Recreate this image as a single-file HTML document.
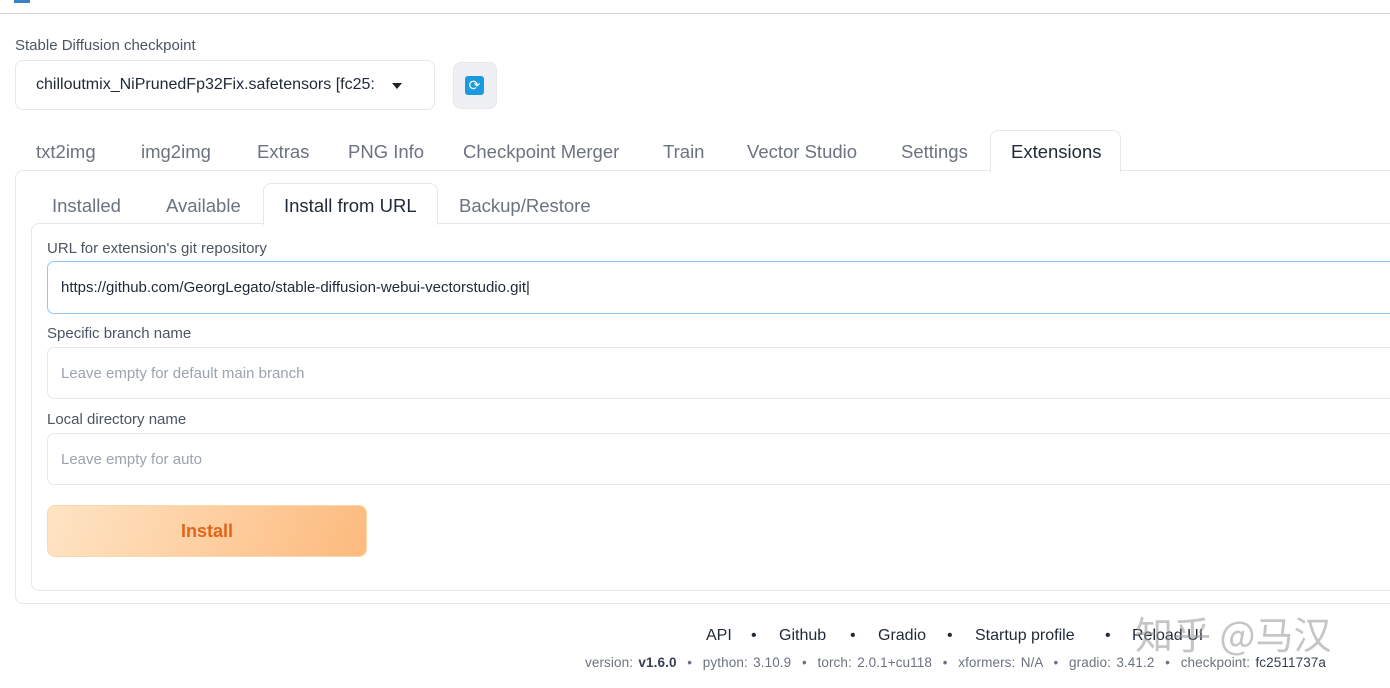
<!DOCTYPE html>
<html><head><meta charset="utf-8"><style>
*{box-sizing:border-box;margin:0;padding:0}
body{width:1390px;height:688px;overflow:hidden;background:#fff;font-family:"Liberation Sans",sans-serif;color:#374151;position:relative}
.a{position:absolute}
.lbl{font-size:15px;color:#4b5563}
.tab{position:absolute;top:141px;font-size:18.5px;color:#6b7280}
.itab{position:absolute;top:195px;font-size:18.5px;color:#6b7280}
.inp{position:absolute;left:47px;width:1360px;border:1px solid #e5e7eb;border-radius:7px;font-size:15px;color:#9ca3af;padding-left:13px;display:flex;align-items:center}
.f{position:absolute;top:627px;font-size:16px;color:#1f2937;white-space:nowrap}
</style></head><body>
<div class="a" style="left:0;top:13px;width:1390px;height:1px;background:#d1d5db"></div>
<div class="a" style="left:14px;top:0;width:16px;height:3px;background:#3b82c4"></div>
<div class="a lbl" style="left:15px;top:37px">Stable Diffusion checkpoint</div>
<div class="a" style="left:15px;top:60px;width:420px;height:50px;border:1px solid #e5e7eb;border-radius:8px;font-size:16px;color:#1f2937;padding:15px 0 0 20px">chilloutmix_NiPrunedFp32Fix.safetensors [fc25:</div>
<div class="a" style="left:392px;top:83px;width:0;height:0;border-left:5px solid transparent;border-right:5px solid transparent;border-top:6px solid #222"></div>
<div class="a" style="left:453px;top:62px;width:44px;height:47px;background:#eef0f3;border:1px solid #e5e7eb;border-radius:8px"></div>
<div class="a" style="left:465px;top:76px;width:19px;height:19px;background:#1a9be0;border-radius:3px;color:#fff;font-size:14px;line-height:19px;text-align:center">⟳</div>
<div class="tab" style="left:36px">txt2img</div>
<div class="tab" style="left:141px">img2img</div>
<div class="tab" style="left:257px">Extras</div>
<div class="tab" style="left:348px">PNG Info</div>
<div class="tab" style="left:463px">Checkpoint Merger</div>
<div class="tab" style="left:663px">Train</div>
<div class="tab" style="left:747px">Vector Studio</div>
<div class="tab" style="left:901px">Settings</div>
<div class="a" style="left:15px;top:170px;width:1400px;height:434px;border:1px solid #e5e7eb;border-radius:8px"></div>
<div class="a" style="left:990px;top:130px;width:131px;height:42px;border:1px solid #e5e7eb;border-bottom:none;border-radius:8px 8px 0 0;background:#fff"></div>
<div class="tab" style="left:1011px;color:#1f2937">Extensions</div>
<div class="a" style="left:31px;top:223px;width:1400px;height:368px;border:1px solid #e5e7eb;border-radius:8px"></div>
<div class="a" style="left:263px;top:183px;width:175px;height:42px;border:1px solid #e5e7eb;border-bottom:none;border-radius:8px 8px 0 0;background:#fff"></div>
<div class="itab" style="left:52px">Installed</div>
<div class="itab" style="left:166px">Available</div>
<div class="itab" style="left:284px;color:#1f2937">Install from URL</div>
<div class="itab" style="left:459px">Backup/Restore</div>
<div class="a lbl" style="left:47px;top:240px">URL for extension's git repository</div>
<div class="inp" style="top:261px;height:53px;border-color:#93c5fd;color:#1f2937">https://github.com/GeorgLegato/stable-diffusion-webui-vectorstudio.git|</div>
<div class="a lbl" style="left:47px;top:325px">Specific branch name</div>
<div class="inp" style="top:347px;height:52px">Leave empty for default main branch</div>
<div class="a lbl" style="left:47px;top:411px">Local directory name</div>
<div class="inp" style="top:433px;height:52px">Leave empty for auto</div>
<div class="a" style="left:47px;top:505px;width:320px;height:52px;border-radius:8px;background:linear-gradient(110deg,#fee4c5,#fdba7d);border:1px solid #fed7aa;color:#e0661c;font-weight:bold;font-size:18px;text-align:center;line-height:50px">Install</div>
<div class="f" style="left:706px">API</div><div class="f" style="left:751px">•</div>
<div class="f" style="left:779px">Github</div><div class="f" style="left:850px">•</div>
<div class="f" style="left:878px">Gradio</div><div class="f" style="left:947px">•</div>
<div class="f" style="left:975px">Startup profile</div><div class="f" style="left:1105px">•</div>
<div class="f" style="left:1132px">Reload UI</div>
<div class="a" style="left:1135px;top:605px;font-size:38px;color:rgba(150,150,150,.55);font-family:'Noto Sans CJK SC',sans-serif">知乎 @马汉</div>
<div class="a" style="left:585px;top:655px;font-size:13.5px;color:#6b7280;white-space:nowrap;word-spacing:1.5px;letter-spacing:0.1px">version: <b style="color:#374151">v1.6.0</b> &nbsp;•&nbsp; python: 3.10.9 &nbsp;•&nbsp; torch: 2.0.1+cu118 &nbsp;•&nbsp; xformers: N/A &nbsp;•&nbsp; gradio: 3.41.2 &nbsp;•&nbsp; checkpoint: <span style="color:#374151">fc2511737a</span></div>
</body></html>
